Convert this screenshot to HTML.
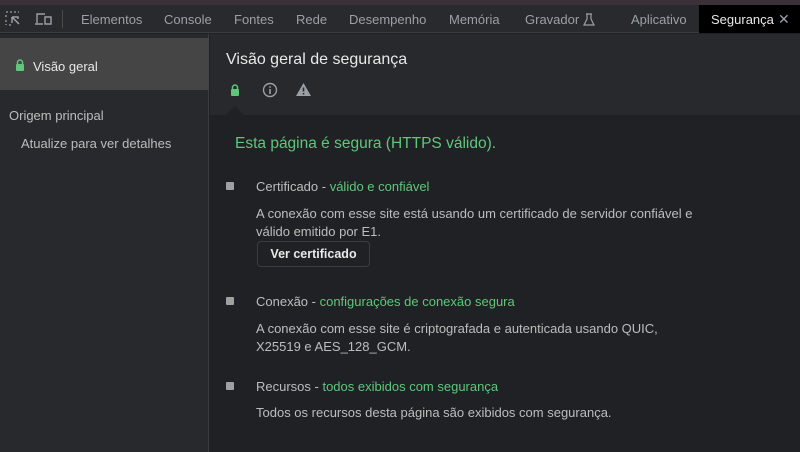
<!DOCTYPE html><html><head><style>
*{margin:0;padding:0;box-sizing:border-box}
body{width:800px;height:452px;overflow:hidden;background:#202124;font-family:"Liberation Sans",sans-serif;color:#c5c5c5;position:relative}
.top{position:absolute;left:0;top:0;width:800px;height:5px;background:#3a3139}
.tabs{position:absolute;left:0;top:5px;width:800px;height:28px;background:#292a2d;border-bottom:1px solid #3c3c3f;font-size:13px;color:#9aa0a6}
.tabs span{position:absolute;top:7px}
.side{position:absolute;left:0;top:34px;width:209px;height:418px;background:#28292c;border-right:1px solid #3c3c3f}
.sel{position:absolute;left:0;top:4px;width:209px;height:52px;background:#454545;color:#e8e8e8;font-size:13px}
.hdr{position:absolute;left:210px;top:34px;width:590px;height:81px;background:#28292c}
.g{color:#5fc77c}
.sq{position:absolute;left:226px;width:8px;height:8px;background:#a0a0a0;border-radius:1px}
.t{position:absolute;font-size:13px;color:#bdbdbd}
.d{position:absolute;left:256px;font-size:13px;color:#bdbdbd;line-height:18px}
</style></head><body>
<div class="top"></div>
<div class="tabs">
<svg style="position:absolute;left:5px;top:6px" width="16" height="16"><path d="M1 1h2M5 1h2M9 1h2M13 1h1M1 4v2M1 9v2M1 13v1M4 14h2" stroke="#9aa0a6" stroke-width="1.3" fill="none"/><path d="M7 6h6v2M7 6v6M7 6l7 7" stroke="#9aa0a6" stroke-width="1.5" fill="none"/></svg>
<svg style="position:absolute;left:34px;top:6px" width="18" height="16"><path d="M3 12V3h8M1 13h8M11 6h6v7h-6z" stroke="#9aa0a6" stroke-width="1.4" fill="none"/></svg>
<div style="position:absolute;left:62px;top:5px;width:1px;height:18px;background:#4a4a4d"></div>
<span style="left:81px">Elementos</span><span style="left:164px">Console</span><span style="left:234px">Fontes</span><span style="left:296px">Rede</span><span style="left:349px">Desempenho</span><span style="left:449px">Memória</span><span style="left:525px">Gravador</span>
<svg style="position:absolute;left:583px;top:8px" width="12" height="14"><path d="M3 1h6M4 1v5L1 12h10L8 6V1" stroke="#9aa0a6" stroke-width="1.2" fill="none"/></svg>
<span style="left:631px">Aplicativo</span>
<div style="position:absolute;left:699px;top:0;width:101px;height:28px;background:#000"></div>
<span style="left:711px;color:#e8e8e8">Segurança</span><span style="left:778px;color:#9aa0a6;font-size:14px;top:6px">✕</span>
</div>
<div class="side">
<div class="sel"><svg style="position:absolute;left:15px;top:21px" width="10" height="12"><path d="M2.5 5V3.5a2.5 2.5 0 015 0V5" stroke="#5fc77c" stroke-width="1.5" fill="none"/><rect x="1" y="5" width="8" height="7" rx="1" fill="#5fc77c"/></svg><span style="position:absolute;left:33px;top:21px">Visão geral</span></div>
<div class="t" style="left:9px;top:74px">Origem principal</div>
<div class="t" style="left:21px;top:102px">Atualize para ver detalhes</div>
</div>
<div class="hdr">
<div style="position:absolute;left:16px;top:17px;font-size:16px;color:#e8e8e8">Visão geral de segurança</div>
<svg style="position:absolute;left:20px;top:50px" width="10" height="12"><path d="M2.5 5V3.5a2.5 2.5 0 015 0V5" stroke="#5fc77c" stroke-width="1.5" fill="none"/><rect x="1" y="5" width="8" height="7" rx="1" fill="#5fc77c"/></svg>
<svg style="position:absolute;left:52px;top:48px" width="16" height="16"><circle cx="8" cy="8" r="6.5" stroke="#9aa0a6" stroke-width="1.4" fill="none"/><path d="M8 7v5M8 4.3v1.4" stroke="#9aa0a6" stroke-width="1.6"/></svg>
<svg style="position:absolute;left:85px;top:48px" width="17" height="15"><path d="M8.5 1L16 14H1z" fill="#9aa0a6"/><path d="M8.5 5.5v4M8.5 11v1.5" stroke="#28292c" stroke-width="1.6"/></svg>
<svg style="position:absolute;left:16px;top:72px" width="18" height="9"><path d="M0 9L9 0l9 9z" fill="#202124"/></svg>
</div>
<div class="g" style="position:absolute;left:235px;top:135px;font-size:15.5px">Esta página é segura (HTTPS válido).</div>
<div class="sq" style="top:182px"></div>
<div class="t" style="left:256px;top:179px">Certificado - <span class="g">válido e confiável</span></div>
<div class="d" style="top:205px">A conexão com esse site está usando um certificado de servidor confiável e<br>válido emitido por E1.</div>
<div style="position:absolute;left:257px;top:241px;width:113px;height:26px;border:1px solid #3c3c3f;border-radius:4px;color:#e8e8e8;font-size:12.5px;font-weight:bold;text-align:center;line-height:24px">Ver certificado</div>
<div class="sq" style="top:297px"></div>
<div class="t" style="left:256px;top:294px">Conexão - <span class="g">configurações de conexão segura</span></div>
<div class="d" style="top:320px">A conexão com esse site é criptografada e autenticada usando QUIC,<br>X25519 e AES_128_GCM.</div>
<div class="sq" style="top:382px"></div>
<div class="t" style="left:256px;top:379px">Recursos - <span class="g">todos exibidos com segurança</span></div>
<div class="d" style="top:404px">Todos os recursos desta página são exibidos com segurança.</div>
</body></html>
